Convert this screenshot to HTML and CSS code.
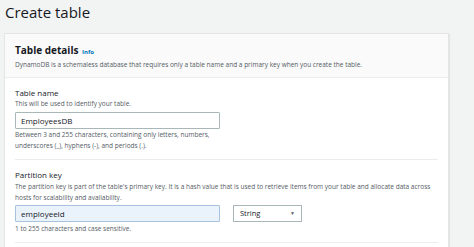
FILE: index.html
```html
<!DOCTYPE html>
<html lang="en">
<head>
  <meta charset="UTF-8">
  <title>Create table</title>
  <meta name="viewport" content="width=device-width, initial-scale=1.0">
  <link rel="stylesheet" href="styles.css">
</head>
<body>
  <h1 class="page-title">Create table</h1>

  <div class="card">
    <div class="card-header">
      <div class="card-title">Table details <span class="info">Info</span></div>
      <div class="hint">DynamoDB is a schemaless database that requires only a table name and a primary key when you create the table.</div>
    </div>

    <div class="card-body">
      <div class="field">
        <div class="label">Table name</div>
        <div class="hint">This will be used to identify your table.</div>
        <div class="input">EmployeesDB</div>
        <div class="hint">Between 3 and 255 characters, containing only letters, numbers,<br>underscores (_), hyphens (-), and periods (.).</div>
      </div>

      <div class="field divided">
        <div class="label">Partition key</div>
        <div class="hint">The partition key is part of the table's primary key. It is a hash value that is used to retrieve items from your table and allocate data across<br>hosts for scalability and availability.</div>
        <div class="row">
          <div class="input focused">employeeId</div>
          <div class="select">String <span class="caret">&#9660;</span></div>
        </div>
        <div class="hint">1 to 255 characters and case sensitive.</div>
      </div>

      <div class="field divided">
        <div class="label">Sort key - <i>optional</i></div>
      </div>
    </div>
  </div>
</body>
</html>
```

FILE: styles.css
```css
html, body {
  margin: 0;
  padding: 0;
  background: #f2f3f3;
  font-family: "Open Sans", Arial, sans-serif;
  color: #16191f;
  overflow: hidden;
}

body {
  padding: 0 25px 0 4px;
}

.page-title {
  margin: 0;
  padding: 1px 0 0 1px;
  height: 32px;
  font-size: 15px;
  font-weight: 400;
  line-height: 22px;
}

.card {
  background: #fff;
  border: 1px solid #e4e6e6;
  box-shadow: 1px 1px 1px rgba(0, 0, 0, 0.06);
}

.card-header {
  background: #fafafa;
  border-bottom: 1px solid #eaeded;
  padding: 10px 10px 9px;
  height: 24px;
}

.card-title {
  font-size: 10px;
  font-weight: 700;
  line-height: 13px;
}

.info {
  color: #0073bb;
  font-size: 6px;
  margin-left: 1px;
}

.hint {
  font-size: 6.5px;
  line-height: 11px;
  color: #545b64;
  white-space: nowrap;
}

.card-body {
  padding: 8px 10px 0;
}

.field {
  padding-bottom: 8px;
}

.divided {
  border-top: 1px solid #eaeded;
  padding-top: 9px;
  width: 423px;
}

.label {
  font-size: 8px;
  line-height: 12px;
}

.field:first-child .label {
  padding-top: 1px;
  line-height: 11px;
}

.input {
  box-sizing: border-box;
  width: 205px;
  height: 17px;
  margin: 3px 0 0;
  padding: 0 5px;
  border: 1px solid #aab7b8;
  border-radius: 1px;
  font-size: 8px;
  line-height: 15px;
}

.focused {
  background: #eaf3fc;
  border-color: #a7c3dd;
}

.row {
  display: flex;
  gap: 13px;
  align-items: center;
  margin-bottom: 1px;
}

.row .input {
  margin: 2px 0 0;
}

.select {
  box-sizing: border-box;
  width: 69px;
  height: 17px;
  margin-top: 2px;
  padding: 0 6px;
  border: 1px solid #aab7b8;
  font-size: 7.5px;
  line-height: 15px;
  display: flex;
  justify-content: space-between;
}

.caret {
  font-size: 5px;
  color: #545b64;
}
```
